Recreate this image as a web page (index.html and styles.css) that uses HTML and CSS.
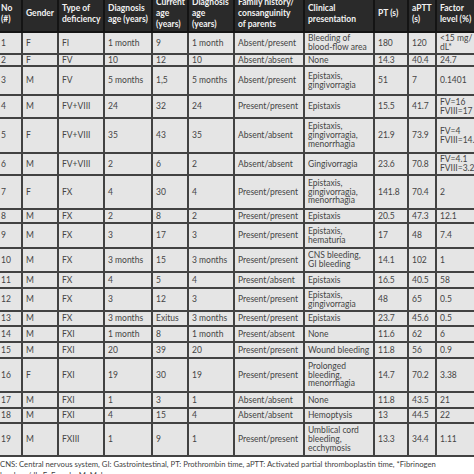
FILE: index.html
```html
<!DOCTYPE html>
<html>
<head>
<meta charset="utf-8">
<link rel="stylesheet" href="styles.css">
</head>
<body>
<div class="page">
<table class="data">
<colgroup>
<col class="c-no"><col class="c-gender"><col class="c-type"><col class="c-diag"><col class="c-cur"><col class="c-diag2"><col class="c-fam"><col class="c-clin"><col class="c-pt"><col class="c-aptt"><col class="c-factor">
</colgroup>
<thead>
<tr class="h37">
<th>No<br>(#)</th><th>Gender</th><th>Type of deficiency</th><th>Diagnosis age (years)</th><th>Current age (years)</th><th>Diagnosis age (years)</th><th>Family history/ consanguinity of parents</th><th>Clinical presentation</th><th>PT (s)</th><th>aPTT (s)</th><th>Factor<br>level (%)</th>
</tr>
</thead>
<tbody>
<tr class="h22"><td>1</td><td>F</td><td>FI</td><td>1 month</td><td>9</td><td>1 month</td><td>Absent/present</td><td>Bleeding of blood-flow area</td><td>180</td><td>120</td><td>&lt;15 mg/<br>dL*</td></tr>
<tr class="h12"><td>2</td><td>F</td><td>FV</td><td>10</td><td>12</td><td>10</td><td>Absent/absent</td><td>None</td><td>14.3</td><td>40.4</td><td>24.7</td></tr>
<tr class="h29"><td>3</td><td>M</td><td>FV</td><td>5 months</td><td>1,5</td><td>5 months</td><td>Absent/present</td><td>Epistaxis, gingivorragia</td><td>51</td><td>7</td><td>0.1401</td></tr>
<tr class="h23"><td>4</td><td>M</td><td>FV+VIII</td><td>24</td><td>32</td><td>24</td><td>Present/present</td><td>Epistaxis</td><td>15.5</td><td>41.7</td><td>FV=16<br>FVIII=17</td></tr>
<tr class="h35"><td>5</td><td>F</td><td>FV+VIII</td><td>35</td><td>43</td><td>35</td><td>Absent/absent</td><td>Epistaxis, gingivorragia, menorrhagia</td><td>21.9</td><td>73.9</td><td>FV=4<br>FVIII=14.7</td></tr>
<tr class="h22"><td>6</td><td>M</td><td>FV+VIII</td><td>2</td><td>6</td><td>2</td><td>Absent/absent</td><td>Gingivorragia</td><td>23.6</td><td>70.8</td><td>FV=4.1<br>FVIII=3.2</td></tr>
<tr class="h34"><td>7</td><td>F</td><td>FX</td><td>4</td><td>30</td><td>4</td><td>Present/present</td><td>Epistaxis, gingivorragia, menorrhagia</td><td>141.8</td><td>70.4</td><td>2</td></tr>
<tr class="h14"><td>8</td><td>M</td><td>FX</td><td>2</td><td>8</td><td>2</td><td>Present/present</td><td>Epistaxis</td><td>20.5</td><td>47.3</td><td>12.1</td></tr>
<tr class="h25"><td>9</td><td>M</td><td>FX</td><td>3</td><td>17</td><td>3</td><td>Present/present</td><td>Epistaxis, hematuria</td><td>17</td><td>48</td><td>7.4</td></tr>
<tr class="h24"><td>10</td><td>M</td><td>FX</td><td>3 months</td><td>15</td><td>3 months</td><td>Present/present</td><td>CNS bleeding, GI bleeding</td><td>14.1</td><td>102</td><td>1</td></tr>
<tr class="h16"><td>11</td><td>M</td><td>FX</td><td>4</td><td>5</td><td>4</td><td>Present/absent</td><td>Epistaxis</td><td>16.5</td><td>40.5</td><td>58</td></tr>
<tr class="h23"><td>12</td><td>M</td><td>FX</td><td>3</td><td>12</td><td>3</td><td>Present/present</td><td>Epistaxis, gingivorragia</td><td>48</td><td>65</td><td>0.5</td></tr>
<tr class="h15"><td>13</td><td>M</td><td>FX</td><td>3 months</td><td>Exitus</td><td>3 months</td><td>Present/present</td><td>Epistaxis</td><td>23.7</td><td>45.6</td><td>0.5</td></tr>
<tr class="h16"><td>14</td><td>M</td><td>FXI</td><td>1 month</td><td>8</td><td>1 month</td><td>Present/absent</td><td>None</td><td>11.6</td><td>62</td><td>6</td></tr>
<tr class="h16"><td>15</td><td>M</td><td>FXI</td><td>20</td><td>39</td><td>20</td><td>Present/present</td><td>Wound bleeding</td><td>11.8</td><td>56</td><td>0.9</td></tr>
<tr class="h34"><td>16</td><td>F</td><td>FXI</td><td>19</td><td>30</td><td>19</td><td>Present/present</td><td>Prolonged bleeding, menorrhagia</td><td>14.7</td><td>70.2</td><td>3.38</td></tr>
<tr class="h16"><td>17</td><td>M</td><td>FXI</td><td>1</td><td>3</td><td>1</td><td>Absent/absent</td><td>None</td><td>11.8</td><td>43.5</td><td>21</td></tr>
<tr class="h15"><td>18</td><td>M</td><td>FXI</td><td>4</td><td>15</td><td>4</td><td>Absent/absent</td><td>Hemoptysis</td><td>13</td><td>44.5</td><td>22</td></tr>
<tr class="h33"><td>19</td><td>M</td><td>FXIII</td><td>1</td><td>9</td><td>1</td><td>Present/present</td><td>Umblical cord bleeding, ecchymosis</td><td>13.3</td><td>34.4</td><td>1.11</td></tr>
</tbody>
</table>
<p class="note">CNS: Central nervous system, GI: Gastrointestinal, PT: Prothrombin time, aPTT: Activated partial thromboplastin time, *Fibrinogen<br>level mg/dL, F: Female, M: Male</p>
</div>
</body>
</html>
```
FILE: styles.css
```css
html, body {
  margin: 0;
  padding: 0;
  overflow: hidden;
  background: #ffffff;
}
.page {
  width: 520px;
  font-family: Lato, "Open Sans", "Liberation Sans", sans-serif;
  color: #444444;
}
.data {
  border-collapse: collapse;
  table-layout: fixed;
  width: 494px;
  margin: -6px 0 0 -4px;
  font-size: 8.5px;
}
.c-no { width: 25px; }
.c-gender { width: 36px; }
.c-type { width: 46px; }
.c-diag { width: 48px; }
.c-cur { width: 36px; }
.c-diag2 { width: 46px; }
.c-fam { width: 70px; }
.c-clin { width: 70px; }
.c-pt { width: 34px; }
.c-aptt { width: 28px; }
.c-factor { width: 55px; }
.data th, .data td {
  border: 2px solid #424242;
  padding: 0 3px 0 3px;
  text-align: left;
  vertical-align: middle;
  white-space: normal;
  overflow: visible;
}
.data th {
  background: #2a2a2a;
  color: #f2f2f2;
  font-weight: 700;
  line-height: 10.8px;
  border-color: #141414;
}
.data td {
  background: #e5e5e5;
  line-height: 8.8px;
}
.data td:last-child { white-space: nowrap; }
.h12 { height: 12px; }
.h14 { height: 14px; }
.h15 { height: 15px; }
.h16 { height: 16px; }
.h22 { height: 22px; }
.h23 { height: 23px; }
.h24 { height: 24px; }
.h25 { height: 25px; }
.h29 { height: 29px; }
.h33 { height: 33px; }
.h34 { height: 34px; }
.h35 { height: 35px; }
.h37 { height: 37px; }
.note {
  margin: 2px 0 0 0;
  font-size: 7.7px;
  line-height: 11px;
  color: #3f3f3f;
  white-space: nowrap;
}
```
